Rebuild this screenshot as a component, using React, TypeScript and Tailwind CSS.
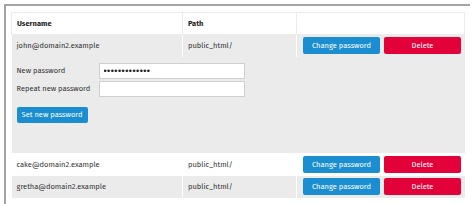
import React from 'react';

const font = { fontFamily: '"Fira Sans", "Open Sans", "Noto Sans", sans-serif' };

function Actions() {
  return (
    <div className="flex gap-[4px]">
      <button className="w-[77px] h-[17px] rounded-[2px] bg-[#1a8ed0] text-white text-[7.5px] leading-none">
        Change password
      </button>
      <button className="w-[77px] h-[17px] rounded-[2px] bg-[#e3013a] text-white text-[7.5px] leading-none">
        Delete
      </button>
    </div>
  );
}

function UserRow({ name, bg }: { name: string; bg: string }) {
  return (
    <tr className={bg}>
      <td className="h-[22px] pl-[5px] border-r border-white">{name}</td>
      <td className="pl-[5px] border-r border-white">public_html/</td>
      <td className="pl-[6px]">
        <Actions />
      </td>
    </tr>
  );
}

export default function App() {
  return (
    <div className="w-[474px] h-[204px] bg-white pt-[4px] pl-[4px]" style={font}>
      <div className="w-[466px] h-[200px] border-t-2 border-l-2 border-[#a4a4a4] pt-[6px] pl-[5px]">
        <table className="w-[454px] border-collapse text-[7.5px] text-[#333] table-fixed">
          <colgroup>
            <col className="w-[171px]" />
            <col className="w-[114px]" />
            <col />
          </colgroup>
          <thead>
            <tr className="bg-white">
              <th className="h-[22px] pl-[5px] text-left font-bold text-[#222] border border-[#ececec]">Username</th>
              <th className="pl-[5px] text-left font-bold text-[#222] border border-[#ececec]">Path</th>
              <th className="border border-[#ececec]"></th>
            </tr>
          </thead>
          <tbody>
            <UserRow name="john@domain2.example" bg="bg-[#ebebeb]" />
            <tr className="bg-[#ebebeb]">
              <td colSpan={3} className="h-[97px] align-top pl-[5px] pt-[6px] border-b border-white">
                <div className="flex items-center h-[16px]">
                  <span className="w-[82px]">New password</span>
                  <input
                    type="text"
                    readOnly
                    value="•••••••••••••"
                    className="w-[146px] h-[16px] bg-white border border-[#cfcfcf] px-[4px] text-[9px] font-bold text-[#222] tracking-[0.5px] outline-none"
                  />
                </div>
                <div className="flex items-center h-[16px] mt-[2px]">
                  <span className="w-[82px]">Repeat new password</span>
                  <input
                    type="password"
                    readOnly
                    className="w-[146px] h-[16px] bg-white border border-[#cfcfcf] px-[4px] outline-none"
                  />
                </div>
                <button className="mt-[10px] w-[71px] h-[16px] rounded-[2px] bg-[#1a8ed0] text-white text-[7.5px] leading-none">
                  Set new password
                </button>
              </td>
            </tr>
            <UserRow name="cake@domain2.example" bg="bg-white" />
            <UserRow name="gretha@domain2.example" bg="bg-[#ebebeb]" />
          </tbody>
        </table>
      </div>
    </div>
  );
}
